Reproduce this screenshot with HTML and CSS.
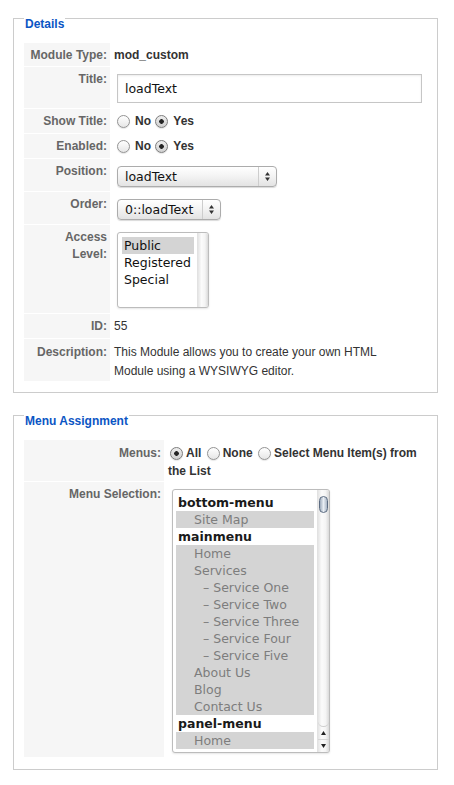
FILE: index.html
```html
<!DOCTYPE html>
<html>
<head>
<meta charset="utf-8">
<title>Module</title>
<link rel="stylesheet" href="styles.css">
</head>
<body>
<fieldset class="box">
  <legend>Details</legend>
  <table class="admintable details">
    <tr class="h24"><td class="key">Module Type:</td><td><strong>mod_custom</strong></td></tr>
    <tr class="h42"><td class="key">Title:</td><td><input class="textbox" type="text" value="loadText"></td></tr>
    <tr class="h25"><td class="key">Show Title:</td><td class="opts"><input type="radio" class="radio first" name="st">No <input type="radio" class="radio" name="st" checked>Yes</td></tr>
    <tr class="h25"><td class="key">Enabled:</td><td class="opts"><input type="radio" class="radio first" name="en">No <input type="radio" class="radio" name="en" checked>Yes</td></tr>
    <tr class="h33"><td class="key">Position:</td><td>
      <div class="select sel-position"><span class="val">loadText</span><span class="step"><svg width="5" height="9" viewBox="0 0 5 9"><path d="M2.5 0L5 3.5H0Z M0 5.5H5L2.5 9Z" fill="#333"/></svg></span></div>
    </td></tr>
    <tr class="h33"><td class="key">Order:</td><td>
      <div class="select sel-order"><span class="val">0::loadText</span><span class="step"><svg width="5" height="9" viewBox="0 0 5 9"><path d="M2.5 0L5 3.5H0Z M0 5.5H5L2.5 9Z" fill="#333"/></svg></span></div>
    </td></tr>
    <tr class="h89"><td class="key">Access Level:</td><td>
      <div class="listbox lb-access">
        <ul class="items">
          <li class="item picked">Public</li>
          <li class="item">Registered</li>
          <li class="item">Special</li>
        </ul>
        <div class="vscroll plain"></div>
      </div>
    </td></tr>
    <tr class="h25"><td class="key">ID:</td><td>55</td></tr>
    <tr class="h43 desc"><td class="key">Description:</td><td>This Module allows you to create your own HTML<br>Module using a WYSIWYG editor.</td></tr>
  </table>
</fieldset>

<fieldset class="box box2">
  <legend>Menu Assignment</legend>
  <table class="admintable menus">
    <tr class="h42 menus-row"><td class="key">Menus:</td><td class="opts"><input type="radio" class="radio first" name="mn" checked>All <input type="radio" class="radio" name="mn">None <input type="radio" class="radio" name="mn">Select Menu Item(s) from<br>the List</td></tr>
    <tr class="h276"><td class="key">Menu Selection:</td><td>
      <div class="listbox lb-menu">
        <ul class="items">
          <li class="item grp">bottom-menu</li>
          <li class="item sub picked">Site Map</li>
          <li class="item grp">mainmenu</li>
          <li class="item sub picked">Home</li>
          <li class="item sub picked">Services</li>
          <li class="item sub2 picked">– Service One</li>
          <li class="item sub2 picked">– Service Two</li>
          <li class="item sub2 picked">– Service Three</li>
          <li class="item sub2 picked">– Service Four</li>
          <li class="item sub2 picked">– Service Five</li>
          <li class="item sub picked">About Us</li>
          <li class="item sub picked">Blog</li>
          <li class="item sub picked">Contact Us</li>
          <li class="item grp">panel-menu</li>
          <li class="item sub picked">Home</li>
        </ul>
        <div class="vscroll">
          <div class="track"><div class="thumb"></div></div>
          <div class="arrow up"><svg width="5" height="4" viewBox="0 0 5 4"><path d="M2.5 0L5 4H0Z" fill="#222"/></svg></div>
          <div class="arrow down"><svg width="5" height="4" viewBox="0 0 5 4"><path d="M0 0H5L2.5 4Z" fill="#222"/></svg></div>
        </div>
      </div>
    </td></tr>
  </table>
</fieldset>
</body>
</html>
```

FILE: styles.css
```css
* { box-sizing: border-box; }
html, body { margin: 0; padding: 0; background: #fff; }
body {
  font-family: "Liberation Sans", Arial, sans-serif;
  font-size: 12px;
  color: #333;
}

.box {
  margin: 4px 16px 0 13px;
  border: 1px solid #ccc;
  padding: 11px 10px 10px;
  min-width: 0;
}
.box + .box { margin-top: 8px; }
.box2 { padding-bottom: 11px; }
.box legend {
  color: #0b55c4;
  font-weight: bold;
  font-size: 12px;
  line-height: 15px;
  padding: 13px 1px 0;
}

.admintable {
  width: 100%;
  border-collapse: separate;
  border-spacing: 0;
  table-layout: fixed;
}
.admintable td {
  vertical-align: top;
  padding: 4px 3px 0;
  line-height: 17px;
}
.admintable td.key {
  background: #f6f6f6;
  color: #666;
  font-weight: bold;
  text-align: right;
  padding: 4px 3px 0 3px;
  border-bottom: 1px solid #fff;
  border-right: 1px solid #fff;
}
.details td.key { width: 87px; }
.menus td.key { width: 141px; }

.h24 { height: 24px; }
.h25 { height: 25px; }
.h33 { height: 33px; }
.h42 { height: 42px; }
.h43 { height: 43px; }
.h89 { height: 89px; }
.h276 { height: 276px; }
.desc td { line-height: 19px; }
.menus-row td { line-height: 18px; }

strong { color: #333; }

.textbox {
  display: block;
  width: 305px;
  height: 29px;
  margin: 3px 0 0 3px;
  border: 1px solid #c6c6c6;
  box-shadow: inset 0 1px 2px rgba(0,0,0,0.08);
  padding: 0 0 0 7px;
  font-family: "DejaVu Sans", sans-serif;
  font-size: 12.5px;
  color: #111;
  background: #fff;
  outline: none;
}

td.opts { font-weight: bold; color: #333; }
.radio {
  -webkit-appearance: none;
  appearance: none;
  display: inline-block;
  width: 13px;
  height: 13px;
  margin: 0 5px 0 1px;
  vertical-align: -3px;
  border: 1px solid #939393;
  border-radius: 50%;
  background: linear-gradient(#ffffff, #e6e6e6);
  box-shadow: 0 1px 1px rgba(0,0,0,0.1);
}
.radio.first { margin-left: 3px; }
.menus-row .radio { margin: 0 3px 0 2px; }
.menus-row .radio.first { margin-left: 2px; }
.radio:checked {
  border-color: #7d7d7d;
  background: radial-gradient(circle, #262626 0, #262626 2px, rgba(0,0,0,0) 2.6px), linear-gradient(#eeeeee, #d0d0d0);
}

.select {
  display: flex;
  height: 21px;
  margin: 3px 0 0 3px;
  border: 1px solid #acacac;
  border-radius: 4px;
  background: linear-gradient(#ffffff, #f4f4f4 45%, #e3e3e3);
  box-shadow: 0 1px 1px rgba(0,0,0,0.15);
  font-family: "DejaVu Sans", sans-serif;
  font-size: 12.5px;
  color: #111;
}
.sel-position { width: 160px; }
.sel-order { width: 104px; }
.select .val { flex: 1; padding-left: 7px; line-height: 19px; white-space: nowrap; }
.select .step {
  width: 18px;
  border-left: 1px solid #cdcdcd;
  display: flex;
  align-items: center;
  justify-content: center;
}

.listbox {
  display: flex;
  margin: 3px 0 0 3px;
  border: 1px solid #bcbcbc;
  border-radius: 3px;
  background: #fff;
  box-shadow: 0 1px 2px rgba(0,0,0,0.1);
  overflow: hidden;
  font-family: "DejaVu Sans", sans-serif;
  font-size: 12.5px;
  color: #111;
}
.items { list-style: none; margin: 0; padding: 4px 0 0; }
.item { height: 17px; line-height: 17px; white-space: nowrap; }
.item.picked { background: #d4d4d4; }

.lb-access { width: 92px; height: 76px; }
.lb-access .items { width: 72px; margin-left: 4px; }
.lb-access .item { padding-left: 2px; }

.lb-menu { width: 158px; height: 264px; margin-left: 4px; }
.lb-menu .items { width: 138px; margin-left: 3px; }
.lb-menu .grp { font-weight: bold; color: #1a1a1a; padding-left: 2px; }
.lb-menu .sub { color: #7d7d7d; padding-left: 18px; }
.lb-menu .sub2 { color: #7d7d7d; padding-left: 27px; }

.vscroll {
  margin-left: 3px;
  flex: 1;
  display: flex;
  flex-direction: column;
  border-left: 1px solid #e2e2e2;
  background: linear-gradient(to right, #e4e4e4, #fbfbfb 35%, #f4f4f4 70%, #d9d9d9);
}
.track { flex: 1; padding-top: 6px; border-bottom: 1px solid #cfcfcf; border-radius: 0 0 6px 6px; }
.thumb {
  width: 9px;
  height: 17px;
  margin-left: 1px;
  border: 1px solid #5d6c82;
  border-radius: 5px;
  background: linear-gradient(to right, #9eabbc, #e9eef4 50%, #a8b4c4);
}
.arrow {
  display: flex;
  align-items: center;
  justify-content: center;
  height: 12px;
}
.arrow.up { height: 13px; border-bottom: 1px solid #d6d6d6; }
```
